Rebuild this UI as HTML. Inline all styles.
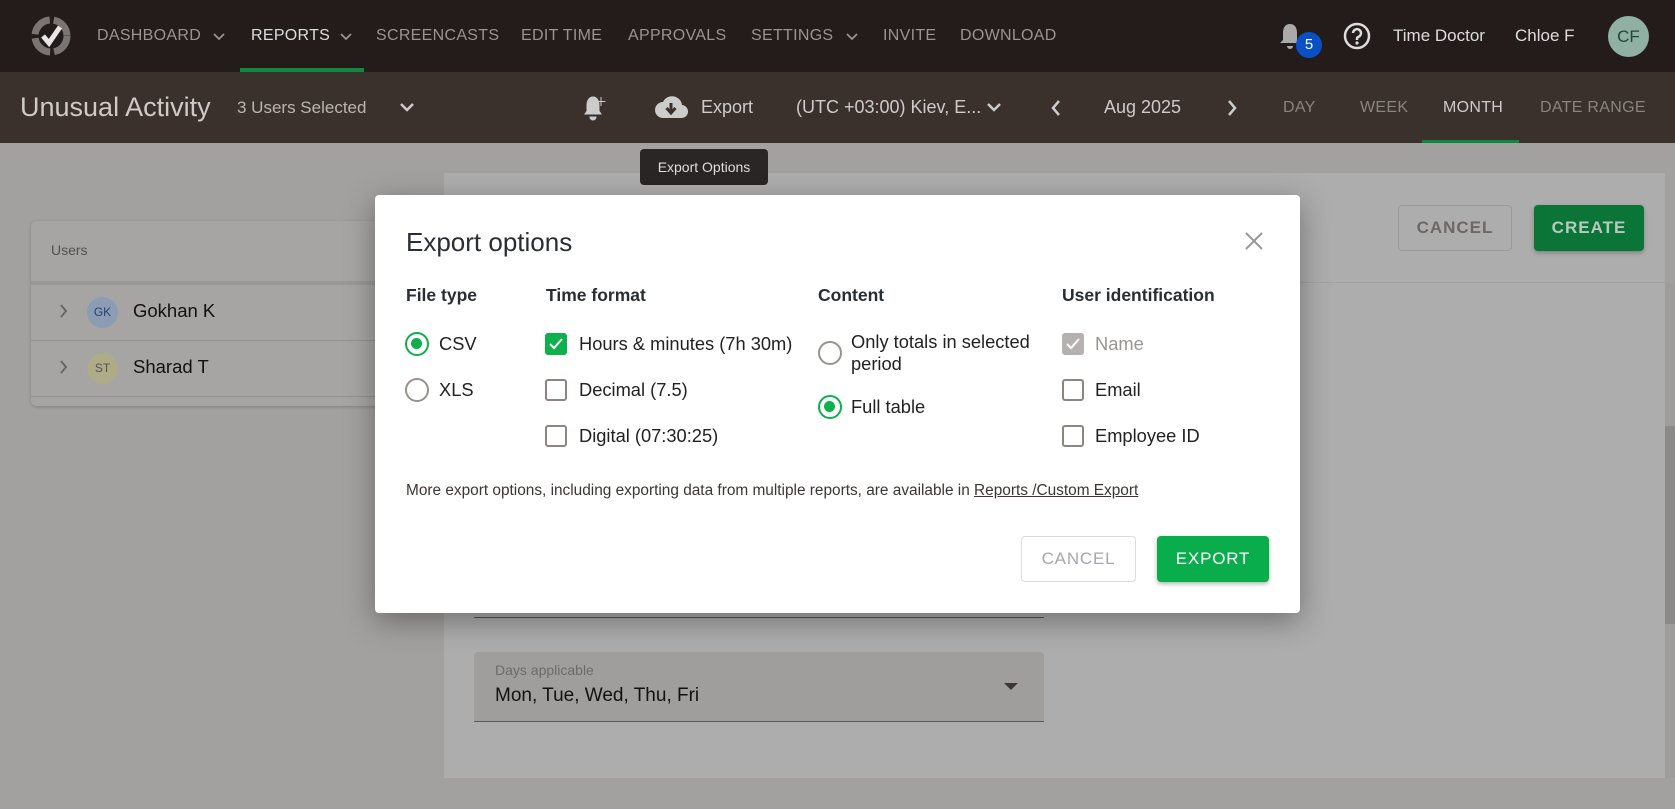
<!DOCTYPE html>
<html><head><meta charset="utf-8"><style>
*{box-sizing:border-box;margin:0;padding:0}
body{width:1675px;height:809px;overflow:hidden;background:#a3a19f;font-family:"Liberation Sans",sans-serif;position:relative}
.a{position:absolute;white-space:nowrap}
.nav{left:0;top:0;width:1675px;height:72px;background:#231c1b}
.bar{left:0;top:72px;width:1675px;height:71px;background:#3a312d}
.ni{top:27px;font-size:16px;letter-spacing:.3px;color:#9a9390}
.sb{font-size:16px;color:#8a8380;letter-spacing:.3px;top:99px}
.modal{left:375px;top:195px;width:925px;height:418px;background:#fff;border-radius:4px;box-shadow:0 8px 30px rgba(0,0,0,.35)}
.h{font-size:17.5px;font-weight:bold;color:#2a2c36;top:285px}
.l{font-size:18.3px;color:#222;}
.rad{width:24px;height:24px;border-radius:50%;border:2.5px solid #9a918e;background:#fff}
.rad.on{border-color:#0db04b}
.rad.on::after{content:"";position:absolute;left:4px;top:4px;width:11px;height:11px;border-radius:50%;background:#0db04b}
.cb{width:22px;height:22px;border:2px solid #8e8582;border-radius:3px;background:#fff}
.chev{position:absolute;top:33px}
</style></head><body>
<div class="a nav"></div>
<svg class="a" style="left:30px;top:15px" width="42" height="42" viewBox="0 0 42 42"><circle cx="21" cy="21" r="16" fill="none" stroke="#7a7472" stroke-width="7" stroke-dasharray="22 4"/><path d="M13 21 l6 7 l11-16" fill="none" stroke="#e8e6e6" stroke-width="5"/></svg>
<div class="a ni" style="left:97px">DASHBOARD</div>
<svg class="chev" style="left:213px" width="12" height="8"><path d="M1 1 l5 5 l5-5" fill="none" stroke="#9a9390" stroke-width="1.8"/></svg>
<div class="a ni" style="left:251px;color:#ddd">REPORTS</div>
<svg class="chev" style="left:340px" width="12" height="8"><path d="M1 1 l5 5 l5-5" fill="none" stroke="#9a9390" stroke-width="1.8"/></svg>
<div class="a" style="left:240px;top:68px;width:124px;height:4px;background:#0e8a3e"></div>
<div class="a ni" style="left:376px">SCREENCASTS</div>
<div class="a ni" style="left:521px">EDIT TIME</div>
<div class="a ni" style="left:628px">APPROVALS</div>
<div class="a ni" style="left:751px">SETTINGS</div>
<svg class="chev" style="left:846px" width="12" height="8"><path d="M1 1 l5 5 l5-5" fill="none" stroke="#9a9390" stroke-width="1.8"/></svg>
<div class="a ni" style="left:883px">INVITE</div>
<div class="a ni" style="left:960px">DOWNLOAD</div>
<svg class="a" style="left:1278px;top:22px" width="24" height="30" viewBox="0 0 24 30"><path d="M12 2 c-5 0-7 4-7 9 v7 l-3 3 h20 l-3-3 v-7 c0-5-2-9-7-9z M9 24 h6 a3 3 0 0 1-6 0z" fill="#aaa"/></svg>
<div class="a" style="left:1296px;top:32px;width:26px;height:26px;border-radius:50%;background:#0a4fc4;color:#fff;font-size:15px;text-align:center;line-height:26px">5</div>
<svg class="a" style="left:1343px;top:22px" width="28" height="28" viewBox="0 0 28 28"><circle cx="14" cy="14" r="12" fill="none" stroke="#ddd" stroke-width="2.5"/><path d="M10 11 a4 4 0 1 1 5 4 c-1 .5-1 1-1 3" fill="none" stroke="#ddd" stroke-width="2.5"/><circle cx="14" cy="21" r="1.6" fill="#ddd"/></svg>
<div class="a" style="left:1393px;top:26px;font-size:17px;color:#ddd">Time Doctor</div>
<div class="a" style="left:1515px;top:26px;font-size:17px;color:#ddd">Chloe F</div>
<div class="a" style="left:1608px;top:16px;width:41px;height:41px;border-radius:50%;background:#8fb0a3;color:#1e4a35;font-size:17px;text-align:center;line-height:41px">CF</div>

<div class="a bar"></div>
<div class="a" style="left:20px;top:92px;font-size:27px;color:#cfcac8">Unusual Activity</div>
<div class="a" style="left:237px;top:98px;font-size:17px;color:#bbb5b2">3 Users Selected</div>
<svg class="a" style="left:399px;top:101px" width="16" height="12"><path d="M2 3 l6 6 l6-6" fill="none" stroke="#ccc" stroke-width="2.5"/></svg>
<svg class="a" style="left:582px;top:93px" width="28" height="30" viewBox="0 0 28 30"><path d="M11 4 c-4 0-6 4-6 8 v6 l-2 3 h16 l-2-3 v-6 c0-4-2-8-6-8z M8 24 h6 a3 3 0 0 1-6 0z M19 4 v9 M14.5 8.5 h9" fill="#ccc" stroke="#ccc" stroke-width="1"/></svg>
<svg class="a" style="left:654px;top:94px" width="34" height="26" viewBox="0 0 34 26"><path d="M9 24 a8 8 0 0 1 0-16 a10 10 0 0 1 19 3 a6.5 6.5 0 0 1-1 13z" fill="#ccc"/><path d="M17 9 v9 M12.5 14 l4.5 5 l4.5-5" fill="none" stroke="#3a312d" stroke-width="3"/></svg>
<div class="a" style="left:701px;top:97px;font-size:18px;color:#ccc">Export</div>
<div class="a" style="left:796px;top:97px;font-size:18px;color:#ccc">(UTC +03:00) Kiev, E...</div>
<svg class="a" style="left:986px;top:101px" width="16" height="12"><path d="M2 3 l6 6 l6-6" fill="none" stroke="#ccc" stroke-width="2.5"/></svg>
<svg class="a" style="left:1050px;top:99px" width="12" height="18"><path d="M9 2 l-6 7 l6 7" fill="none" stroke="#ccc" stroke-width="2.5"/></svg>
<div class="a" style="left:1104px;top:97px;font-size:18px;color:#ccc">Aug 2025</div>
<svg class="a" style="left:1226px;top:99px" width="12" height="18"><path d="M3 2 l6 7 l-6 7" fill="none" stroke="#ccc" stroke-width="2.5"/></svg>
<div class="a sb" style="left:1283px">DAY</div>
<div class="a sb" style="left:1360px">WEEK</div>
<div class="a sb" style="left:1443px;color:#ccc">MONTH</div>
<div class="a sb" style="left:1540px">DATE RANGE</div>
<div class="a" style="left:1422px;top:140px;width:97px;height:3px;background:#0e8a3e"></div>

<div class="a" style="left:444px;top:173px;width:1221px;height:605px;background:#adadad"></div>
<div class="a" style="left:444px;top:282px;width:1221px;height:1px;background:#a2a2a2"></div>
<div class="a" style="left:1665px;top:283px;width:10px;height:495px;background:#9e9d9b"></div>
<div class="a" style="left:1665px;top:426px;width:10px;height:198px;background:#8b8a88"></div>
<div class="a" style="left:1398px;top:205px;width:114px;height:46px;border:1px solid #999;border-radius:4px;color:#6d6866;font-size:17px;font-weight:bold;letter-spacing:1px;text-align:center;line-height:44px">CANCEL</div>
<div class="a" style="left:1534px;top:205px;width:110px;height:46px;background:#0b7437;border-radius:4px;color:#b8c9bd;font-size:17px;font-weight:bold;letter-spacing:1px;text-align:center;line-height:46px;box-shadow:0 2px 4px rgba(0,0,0,.25)">CREATE</div>
<div class="a" style="left:474px;top:617px;width:570px;height:1px;background:#555"></div>
<div class="a" style="left:474px;top:652px;width:570px;height:70px;background:#a09e9c;border-bottom:1px solid #5a5756;border-radius:4px 4px 0 0"></div>
<div class="a" style="left:495px;top:662px;font-size:14px;color:#6e6a68">Days applicable</div>
<div class="a" style="left:495px;top:685px;font-size:19px;color:#111">Mon, Tue, Wed, Thu, Fri</div>
<svg class="a" style="left:1004px;top:683px" width="14" height="8"><path d="M0 0 h14 l-7 7z" fill="#3d3735"/></svg>

<div class="a" style="left:31px;top:221px;width:360px;height:185px;background:#a6a5a3;border-radius:5px;box-shadow:0 1px 3px rgba(0,0,0,.2)"></div>
<div class="a" style="left:51px;top:242px;font-size:14px;color:#55504e">Users</div>
<div class="a" style="left:31px;top:281px;width:360px;height:4px;background:#999897"></div>
<div class="a" style="left:31px;top:340px;width:360px;height:1px;background:#939291"></div>
<div class="a" style="left:31px;top:396px;width:360px;height:1px;background:#939291"></div>
<svg class="a" style="left:59px;top:303px" width="10" height="16"><path d="M2 2 l5 6 l-5 6" fill="none" stroke="#6a6664" stroke-width="2"/></svg>
<svg class="a" style="left:59px;top:359px" width="10" height="16"><path d="M2 2 l5 6 l-5 6" fill="none" stroke="#6a6664" stroke-width="2"/></svg>
<div class="a" style="left:87px;top:297px;width:31px;height:31px;border-radius:50%;background:#8d9cb5;color:#2b3f70;font-size:12px;text-align:center;line-height:31px">GK</div>
<div class="a" style="left:87px;top:353px;width:31px;height:31px;border-radius:50%;background:#aeab87;color:#555;font-size:12px;text-align:center;line-height:31px">ST</div>
<div class="a" style="left:133px;top:300px;font-size:18.5px;color:#111">Gokhan K</div>
<div class="a" style="left:133px;top:356px;font-size:18.5px;color:#111">Sharad T</div>

<div class="a" style="left:640px;top:149px;width:128px;height:36px;background:#2a2626;border-radius:4px;color:#ddd;font-size:14px;text-align:center;line-height:36px">Export Options</div>

<div class="a modal"></div>
<div class="a" style="left:406px;top:227px;font-size:26px;color:#2a2c36">Export options</div>
<svg class="a" style="left:1244px;top:231px" width="20" height="20"><path d="M2 2 L18 18 M18 2 L2 18" stroke="#999" stroke-width="2"/></svg>
<div class="a h" style="left:406px">File type</div>
<div class="a h" style="left:546px">Time format</div>
<div class="a h" style="left:818px">Content</div>
<div class="a h" style="left:1062px">User identification</div>

<div class="a rad on" style="left:405px;top:332px"></div><div class="a l" style="left:439px;top:333px">CSV</div>
<div class="a rad" style="left:405px;top:378px"></div><div class="a l" style="left:439px;top:379px">XLS</div>

<div class="a cb" style="left:545px;top:333px;background:#0db04b;border-color:#0db04b"><svg width="18" height="18" style="position:absolute;left:0;top:0"><path d="M3 9 l4 4 l8-9" fill="none" stroke="#fff" stroke-width="2"/></svg></div>
<div class="a l" style="left:579px;top:333px">Hours &amp; minutes (7h 30m)</div>
<div class="a cb" style="left:545px;top:379px"></div><div class="a l" style="left:579px;top:379px">Decimal (7.5)</div>
<div class="a cb" style="left:545px;top:425px"></div><div class="a l" style="left:579px;top:425px">Digital (07:30:25)</div>

<div class="a rad" style="left:818px;top:341px"></div>
<div class="a l" style="left:851px;top:331px;line-height:22px">Only totals in selected<br>period</div>
<div class="a rad on" style="left:818px;top:395px"></div><div class="a l" style="left:851px;top:396px">Full table</div>

<div class="a cb" style="left:1062px;top:333px;background:#b5b1b0;border-color:#b5b1b0"><svg width="18" height="18" style="position:absolute;left:0;top:0"><path d="M3 9 l4 4 l8-9" fill="none" stroke="#fff" stroke-width="2"/></svg></div>
<div class="a l" style="left:1095px;top:333px;color:#9a9593">Name</div>
<div class="a cb" style="left:1062px;top:379px"></div><div class="a l" style="left:1095px;top:379px">Email</div>
<div class="a cb" style="left:1062px;top:425px"></div><div class="a l" style="left:1095px;top:425px">Employee ID</div>

<div class="a" style="left:406px;top:482px;font-size:15.4px;color:#3d3533">More export options, including exporting data from multiple reports, are available in <u>Reports /Custom Export</u></div>
<div class="a" style="left:1021px;top:536px;width:115px;height:46px;border:1px solid #ddd;border-radius:4px;color:#a9a6ad;font-size:17px;letter-spacing:.8px;text-align:center;line-height:44px">CANCEL</div>
<div class="a" style="left:1157px;top:536px;width:112px;height:46px;background:#0aad4b;border-radius:4px;color:#fff;font-size:17px;letter-spacing:.8px;text-align:center;line-height:46px;box-shadow:0 2px 4px rgba(0,0,0,.3)">EXPORT</div>
</body></html>
